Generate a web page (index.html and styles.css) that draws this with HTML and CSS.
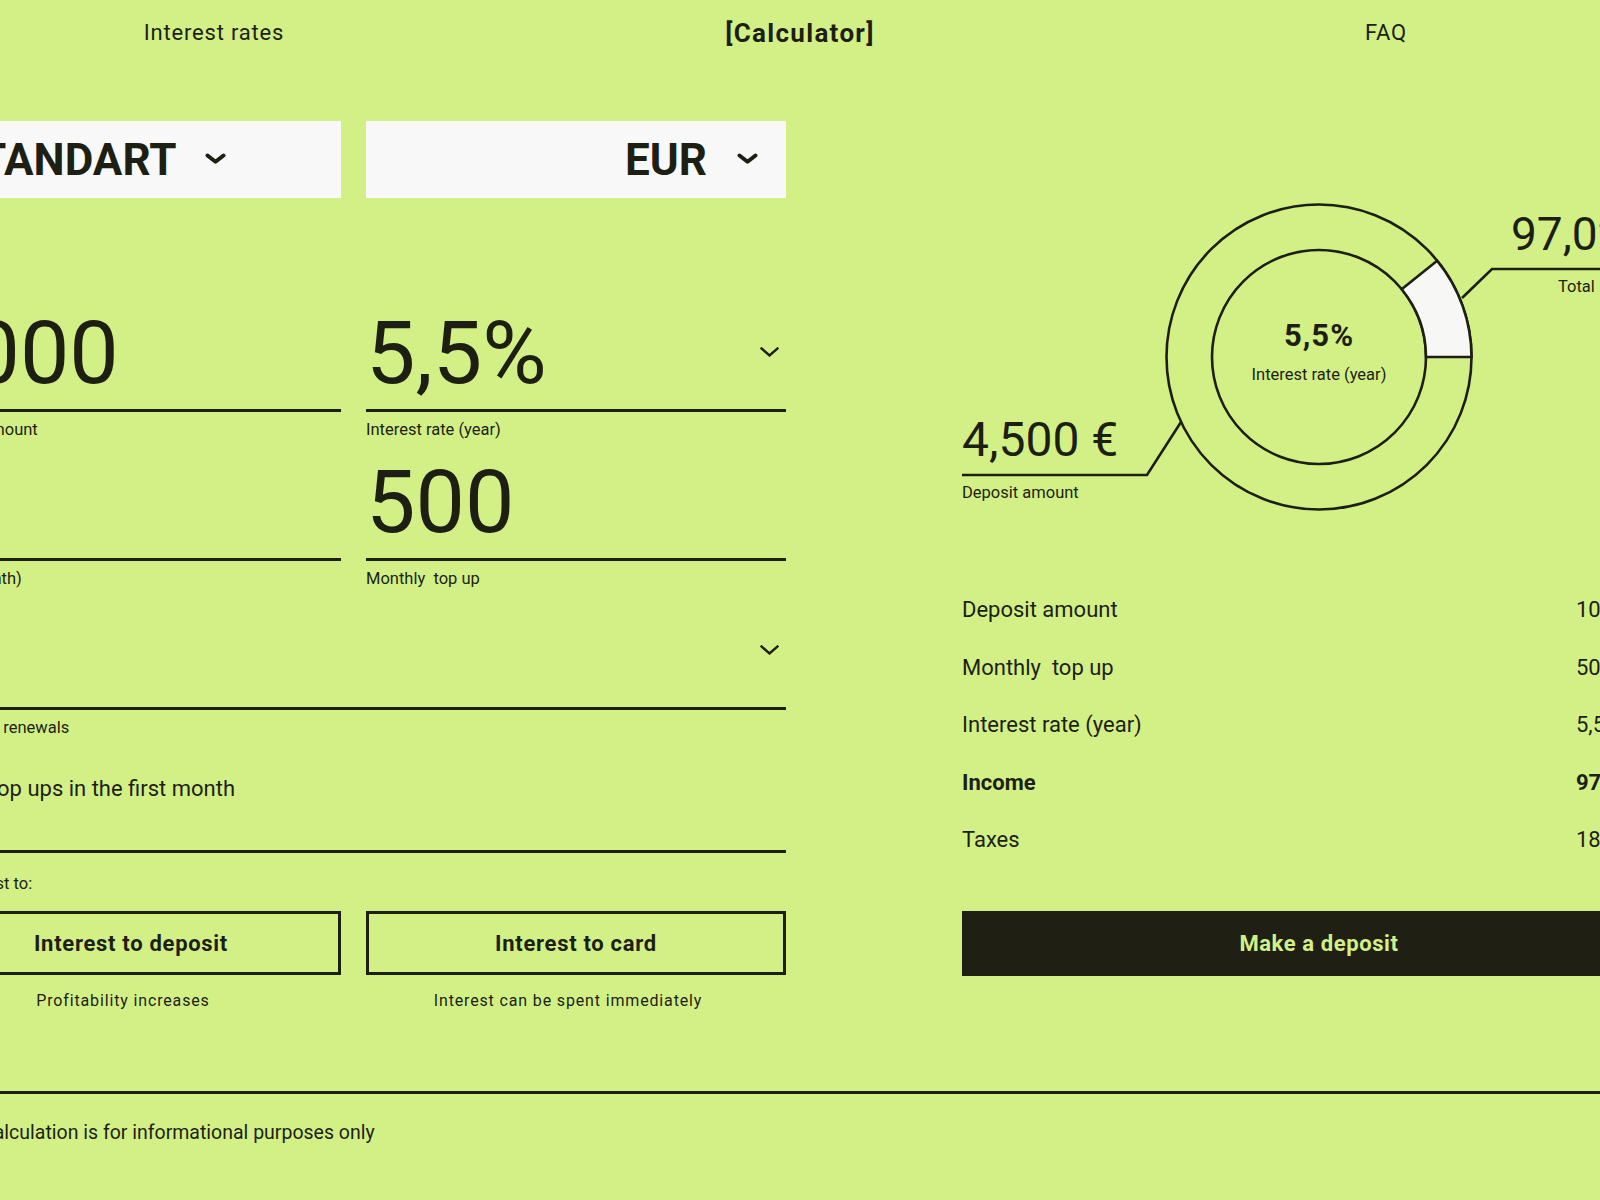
FILE: index.html
```html
<!DOCTYPE html>
<html lang="en">
<head>
<meta charset="utf-8">
<title>Deposit calculator</title>
<link rel="stylesheet" href="styles.css">
</head>
<body>
<div class="page">
  <nav class="nav">
    <a class="nav-item">Interest rates</a>
    <a class="nav-item nav-active">[Calculator]</a>
    <a class="nav-item">FAQ</a>
  </nav>

  <main class="main">
    <section class="form">
      <div class="selects">
        <div class="select select-start">
          <span class="select-text">STANDART</span>
          <svg class="chev-bold" width="21" height="11" viewBox="0 0 21 11"><path d="M2.5 2.5 L10.5 8.8 L18.5 2.5" /></svg>
        </div>
        <div class="select select-end">
          <span class="select-text">EUR</span>
          <svg class="chev-bold" width="21" height="11" viewBox="0 0 21 11"><path d="M2.5 2.5 L10.5 8.8 L18.5 2.5" /></svg>
        </div>
      </div>

      <div class="fields">
        <div class="field">
          <div class="field-value"><span class="big">1000</span></div>
          <div class="field-label">Deposit amount</div>
        </div>
        <div class="field">
          <div class="field-value"><span class="big">5,5%</span>
            <svg class="chev-thin" width="19" height="10" viewBox="0 0 19 10"><path d="M1.5 1.5 L9.5 8.5 L17.5 1.5" /></svg>
          </div>
          <div class="field-label">Interest rate (year)</div>
        </div>
        <div class="field">
          <div class="field-value"><span class="big">6</span></div>
          <div class="field-label">Term (month)</div>
        </div>
        <div class="field">
          <div class="field-value"><span class="big">500</span></div>
          <div class="field-label">Monthly&nbsp; top up</div>
        </div>
        <div class="field field-wide">
          <div class="field-value"><span class="big"></span>
            <svg class="chev-thin" width="19" height="10" viewBox="0 0 19 10"><path d="M1.5 1.5 L9.5 8.5 L17.5 1.5" /></svg>
          </div>
          <div class="field-label">Number of renewals</div>
        </div>
        <div class="field field-wide">
          <div class="check-row">
            <span class="toggle"></span>
            <span class="check-text">Top ups in the first month</span>
          </div>
        </div>
      </div>

      <div class="pay-label">Pay interest to:</div>
      <div class="pay-options">
        <div class="pay-option">
          <div class="btn-outline">Interest to deposit</div>
          <div class="caption">Profitability increases</div>
        </div>
        <div class="pay-option">
          <div class="btn-outline">Interest to card</div>
          <div class="caption">Interest can be spent immediately</div>
        </div>
      </div>
    </section>

    <section class="summary">
      <div class="chart">
        <svg class="chart-svg" width="714" height="459" viewBox="0 0 714 459">
          <circle cx="357" cy="236" r="152.5" class="ring" />
          <circle cx="357" cy="236" r="107" class="ring" />
          <path class="slice" d="M509.5 236 A152.5 152.5 0 0 0 475.1 139.7 L439.7 168.3 A107 107 0 0 1 464 236 Z" />
          <polyline class="leader" points="0,354 185,354 219,301" />
          <polyline class="leader" points="500,177 530,148 820,148" />
        </svg>
        <div class="note note-left">
          <div class="note-value">4,500 €</div>
          <div class="note-label">Deposit amount</div>
        </div>
        <div class="note note-right">
          <div class="note-value note-value-sm">97,025 €</div>
          <div class="note-label note-label-right">Total income</div>
        </div>
        <div class="chart-center">
          <div class="center-value">5,5%</div>
          <div class="center-label">Interest rate (year)</div>
        </div>
      </div>

      <dl class="totals">
        <dt>Deposit amount</dt><dd>10,000 €</dd>
        <dt>Monthly&nbsp; top up</dt><dd>500 €</dd>
        <dt>Interest rate (year)</dt><dd>5,5%</dd>
        <dt class="strong">Income</dt><dd class="strong">97,025 €</dd>
        <dt>Taxes</dt><dd>18,435 €</dd>
      </dl>

      <div class="btn-dark">Make a deposit</div>
    </section>
  </main>

  <footer class="footer">
    <p class="footer-text">The calculation is for informational purposes only</p>
  </footer>
</div>
</body>
</html>
```

FILE: styles.css
```css
* { box-sizing: border-box; }

html, body {
  margin: 0;
  padding: 0;
}

body {
  background: #d3f087;
  color: #1e1f13;
  font-family: Roboto, "Liberation Sans", sans-serif;
  overflow: hidden;
  display: flex;
  justify-content: center;
  height: 1200px;
}

.page {
  flex: none;
  width: 1758px;
}

/* NAV */
.nav {
  display: grid;
  grid-template-columns: 1fr 1fr 1fr;
  height: 66px;
}

.nav-item {
  text-align: center;
  line-height: 66px;
  font-size: 22px;
  letter-spacing: 0.8px;
  color: #1e1f13;
}

.nav-active {
  font-size: 26px;
  font-weight: 700;
  letter-spacing: 1.3px;
}

/* MAIN */
.main {
  display: grid;
  grid-template-columns: 865px 714px;
  column-gap: 176px;
  padding-top: 55px;
  align-items: start;
}

/* SELECTS */
.selects {
  display: grid;
  grid-template-columns: 420px 420px;
  column-gap: 25px;
}

.select {
  height: 77px;
  background: #f8f8f8;
  display: flex;
  align-items: center;
}

.select-start {
  justify-content: flex-start;
  padding-left: 31px;
  gap: 28px;
}

.select-end {
  justify-content: flex-end;
  padding-right: 28px;
  gap: 30px;
}

.select-text {
  font-size: 44px;
  font-weight: 700;
  line-height: 1;
}

.chev-bold {
  flex: none;
  margin-top: -2px;
}

.chev-bold path {
  fill: none;
  stroke: #1e1f13;
  stroke-width: 4;
  stroke-linecap: round;
  stroke-linejoin: round;
}

.chev-thin path {
  fill: none;
  stroke: #1e1f13;
  stroke-width: 2.4;
  stroke-linecap: square;
}

/* FIELDS */
.fields {
  display: grid;
  grid-template-columns: 420px 420px;
  column-gap: 25px;
  row-gap: 12px;
  margin-top: 105px;
}

.field-wide {
  grid-column: 1 / 3;
}

.field-value {
  height: 109px;
  padding-bottom: 6px;
  border-bottom: 3px solid #1e1f13;
  display: flex;
  align-items: center;
  justify-content: space-between;
  padding-right: 7px;
}

.big {
  font-size: 88px;
  line-height: 100px;
  font-weight: 400;
  white-space: nowrap;
}

.chev-thin {
  flex: none;
  margin-bottom: 2px;
}

.field-label {
  margin-top: 8px;
  font-size: 16.5px;
  line-height: 20px;
}

.check-row {
  height: 103px;
  padding-top: 24px;
  border-bottom: 3px solid #1e1f13;
  display: flex;
  align-items: flex-start;
  gap: 24px;
}

.toggle {
  flex: none;
  width: 40px;
  height: 24px;
  margin-top: 3px;
  border: 2px solid #1e1f13;
  border-radius: 12px;
}

.check-text {
  font-size: 22px;
  line-height: 30px;
}

/* PAY OPTIONS */
.pay-label {
  margin-top: 21px;
  padding-left: 2px;
  font-size: 16.5px;
  line-height: 20px;
}

.pay-options {
  display: grid;
  grid-template-columns: 420px 420px;
  column-gap: 25px;
  margin-top: 17px;
}

.btn-outline {
  height: 64px;
  border: 3px solid #1e1f13;
  display: flex;
  align-items: center;
  justify-content: center;
  font-size: 22px;
  font-weight: 700;
  letter-spacing: 0.7px;
}

.caption {
  margin-top: 16px;
  text-align: center;
  padding-right: 16px;
  font-size: 16px;
  line-height: 20px;
  letter-spacing: 0.85px;
}

/* SUMMARY */
.chart {
  position: relative;
  height: 460px;
}

.chart-svg {
  position: absolute;
  left: 0;
  top: 0;
  overflow: visible;
}

.ring {
  fill: none;
  stroke: #1e1f13;
  stroke-width: 2.6;
}

.slice {
  fill: #f7f7f5;
  stroke: #1e1f13;
  stroke-width: 2.6;
  stroke-linejoin: miter;
}

.leader {
  fill: none;
  stroke: #1e1f13;
  stroke-width: 2.6;
}

.note {
  position: absolute;
  white-space: nowrap;
}

.note-left {
  left: 0;
  top: 295px;
}

.note-right {
  left: 549px;
  top: 90px;
}

.note-value {
  font-size: 48px;
  line-height: 48px;
}

.note-value-sm {
  font-size: 46px;
  line-height: 46px;
}

.note-label {
  font-size: 16.5px;
  line-height: 20px;
  margin-top: 19px;
}

.note-label-right {
  margin-top: 20px;
  padding-left: 47px;
}

.chart-center {
  position: absolute;
  left: 207px;
  width: 300px;
  top: 200px;
  text-align: center;
}

.center-value {
  font-size: 31px;
  line-height: 30px;
  font-weight: 700;
  letter-spacing: 1px;
}

.center-label {
  margin-top: 14px;
  font-size: 16.5px;
  line-height: 20px;
}

.totals {
  margin: 0;
  display: grid;
  grid-template-columns: 614px auto;
  font-size: 22px;
  line-height: 57.6px;
}

.totals dt, .totals dd {
  margin: 0;
  white-space: nowrap;
}

.totals .strong {
  font-weight: 700;
}

.btn-dark {
  margin-top: 42px;
  height: 65px;
  background: #1f2013;
  color: #d3f087;
  display: flex;
  align-items: center;
  justify-content: center;
  font-size: 22px;
  font-weight: 700;
  letter-spacing: 0.6px;
}

/* FOOTER */
.footer {
  margin-top: 80px;
  border-top: 3px solid #1e1f13;
  padding-top: 27px;
}

.footer-text {
  margin: 0;
  padding-left: 25px;
  font-size: 19.5px;
  line-height: 24px;
}
```
